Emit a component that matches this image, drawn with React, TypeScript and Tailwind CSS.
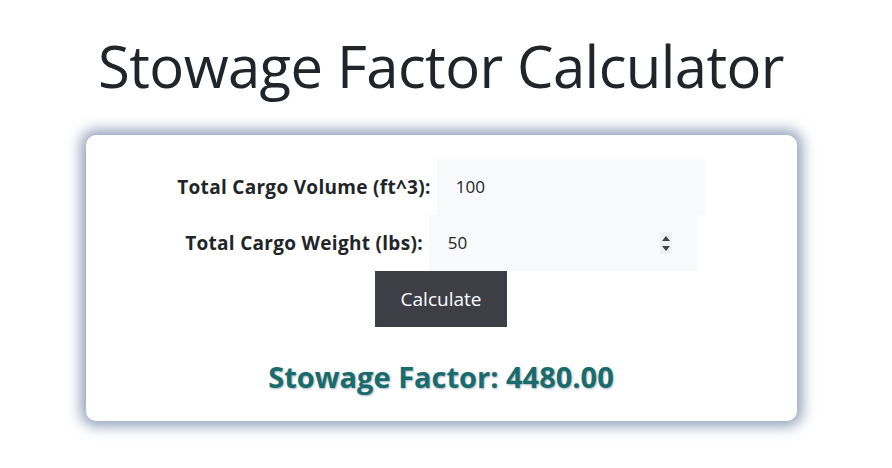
import React from "react";

export default function App() {
  const font = { fontFamily: '"Open Sans", "Noto Sans", sans-serif' };
  return (
    <div className="w-[882px] bg-white min-h-[468px]" style={font}>
      <h1 className="text-center text-[58px] leading-[68px] pt-[32px] text-[#212529] font-normal tracking-[-0.6px]">
        Stowage Factor Calculator
      </h1>
      <div className="mx-auto mt-[35px] w-[711px] h-[286px] rounded-[10px] bg-white shadow-[0_0_14px_5px_rgba(115,135,168,0.8)] pt-[24px] flex flex-col items-center">
        <div className="flex items-center gap-[6px]">
          <label className="text-[19px] font-bold text-[#212529] tracking-[0.3px]">Total Cargo Volume (ft^3):</label>
          <div className="w-[268px] h-[56px] bg-[#f8f9fa] flex items-center pl-[19px] text-[17px] text-[#212529]">100</div>
        </div>
        <div className="flex items-center gap-[6px]">
          <label className="text-[19px] font-bold text-[#212529] tracking-[0.3px]">Total Cargo Weight (lbs):</label>
          <div className="relative w-[268px] h-[56px] bg-[#f8f9fa] flex items-center pl-[19px] text-[17px] text-[#212529]">
            50
            <div className="absolute right-[25px] top-[17px] w-[12px] h-[22px] flex flex-col items-center justify-center gap-[5px] bg-[#f0f1f2]">
              <svg width="8" height="5" viewBox="0 0 8 5"><path d="M0 5 L4 0 L8 5 Z" fill="#444" /></svg>
              <svg width="8" height="5" viewBox="0 0 8 5"><path d="M0 0 L4 5 L8 0 Z" fill="#444" /></svg>
            </div>
          </div>
        </div>
        <button className="w-[132px] h-[56px] bg-[#3e3e46] text-white text-[19px]">Calculate</button>
        <div className="mt-[28px] text-[29px] font-bold text-[#1a6b6b] [text-shadow:1px_1px_2px_rgba(80,110,140,0.5)]">
          Stowage Factor: 4480.00
        </div>
      </div>
    </div>
  );
}
